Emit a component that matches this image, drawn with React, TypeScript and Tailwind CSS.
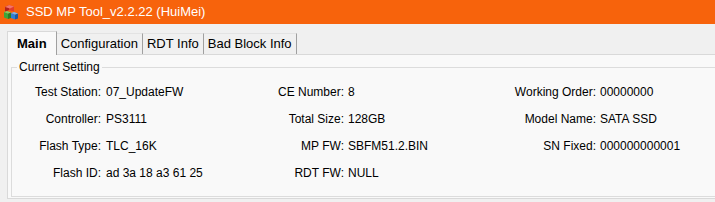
import React from 'react'

const font = { fontFamily: '"Liberation Sans", Arial, sans-serif' }

const rows: [string, string, string, string, string, string][] = [
  ['Test Station:', '07_UpdateFW', 'CE Number:', '8', 'Working Order:', '00000000'],
  ['Controller:', 'PS3111', 'Total Size:', '128GB', 'Model Name:', 'SATA SSD'],
  ['Flash Type:', 'TLC_16K', 'MP FW:', 'SBFM51.2.BIN', 'SN Fixed:', '000000000001'],
  ['Flash ID:', 'ad 3a 18 a3 61 25', 'RDT FW:', 'NULL', '', ''],
]

function AppIcon() {
  return (
    <svg width="16" height="16" viewBox="0 0 16 16">
      {/* red cube */}
      <path d="M6 1 L11 2.5 L11 7.5 L6 6 Z" fill="#e23b2e" />
      <path d="M6 1 L2 3 L2 8 L6 6 Z" fill="#b5221a" />
      <path d="M2 3 L6 1 L11 2.5 L7 4.5 Z" fill="#f2756b" />
      {/* green cube */}
      <path d="M1 8 L5 9.5 L5 15 L1 13.5 Z" fill="#3ea63a" />
      <path d="M5 9.5 L8 8.5 L8 14 L5 15 Z" fill="#2a7d27" />
      <path d="M1 8 L4 7 L8 8.5 L5 9.5 Z" fill="#7bd06a" />
      {/* blue cube */}
      <path d="M8 9 L12 10.5 L12 15.5 L8 14 Z" fill="#2f7fd6" />
      <path d="M12 10.5 L15 9.5 L15 14.5 L12 15.5 Z" fill="#1c5aa3" />
      <path d="M8 9 L11 8 L15 9.5 L12 10.5 Z" fill="#7bb6f0" />
    </svg>
  )
}

function Tab({ label, active }: { label: string; active?: boolean }) {
  return active ? (
    <div className="relative z-10 -mb-px flex h-[24px] items-center border-l border-t border-r border-[#d9d9d9] border-r-[#a0a0a0] bg-[#f9f9f9] px-[9px] text-[13px] font-bold text-black">
      {label}
    </div>
  ) : (
    <div className="flex h-[21px] items-center border-t border-r border-[#e3e3e3] border-r-[#a0a0a0] bg-[#f0f0f0] px-[4px] text-[13px] text-black">
      {label}
    </div>
  )
}

export default function App() {
  return (
    <div className="h-[202px] w-[715px] overflow-hidden bg-[#f0f0f0]" style={font}>
      {/* Title bar */}
      <div className="flex h-[24px] items-center gap-[7px] bg-[#f7630c] pl-[3px] text-[13px] text-white">
        <AppIcon />
        <span>SSD MP Tool_v2.2.22 (HuiMei)</span>
      </div>

      {/* Tabs */}
      <div className="ml-[7px] mt-[7px] flex items-end">
        <Tab label="Main" active />
        <Tab label="Configuration" />
        <Tab label="RDT Info" />
        <Tab label="Bad Block Info" />
      </div>

      {/* Tab panel */}
      <div className="ml-[7px] h-[145px] border-l border-t border-b border-[#d9d9d9] bg-[#f9f9f9] pl-[3px] pt-[5px]">
        <fieldset className="h-[137px] border border-r-0 border-[#dcdcdc] pb-[8px] pl-0 pr-0">
          <legend className="ml-[5px] px-[2px] text-[12px] leading-[14px] text-black">Current Setting</legend>
          <div className="mt-[4px] grid grid-cols-[89px_139px_104px_136px_116px_1fr] auto-rows-[27px] items-center text-[12px] text-black">
            {rows.map((r, i) => (
              <React.Fragment key={i}>
                <span className="whitespace-nowrap text-right">{r[0]}</span>
                <span className="whitespace-nowrap pl-[5px]">{r[1]}</span>
                <span className="whitespace-nowrap text-right">{r[2]}</span>
                <span className="whitespace-nowrap pl-[4px]">{r[3]}</span>
                <span className="whitespace-nowrap text-right">{r[4]}</span>
                <span className="whitespace-nowrap pl-[4px]">{r[5]}</span>
              </React.Fragment>
            ))}
          </div>
        </fieldset>
      </div>
    </div>
  )
}
